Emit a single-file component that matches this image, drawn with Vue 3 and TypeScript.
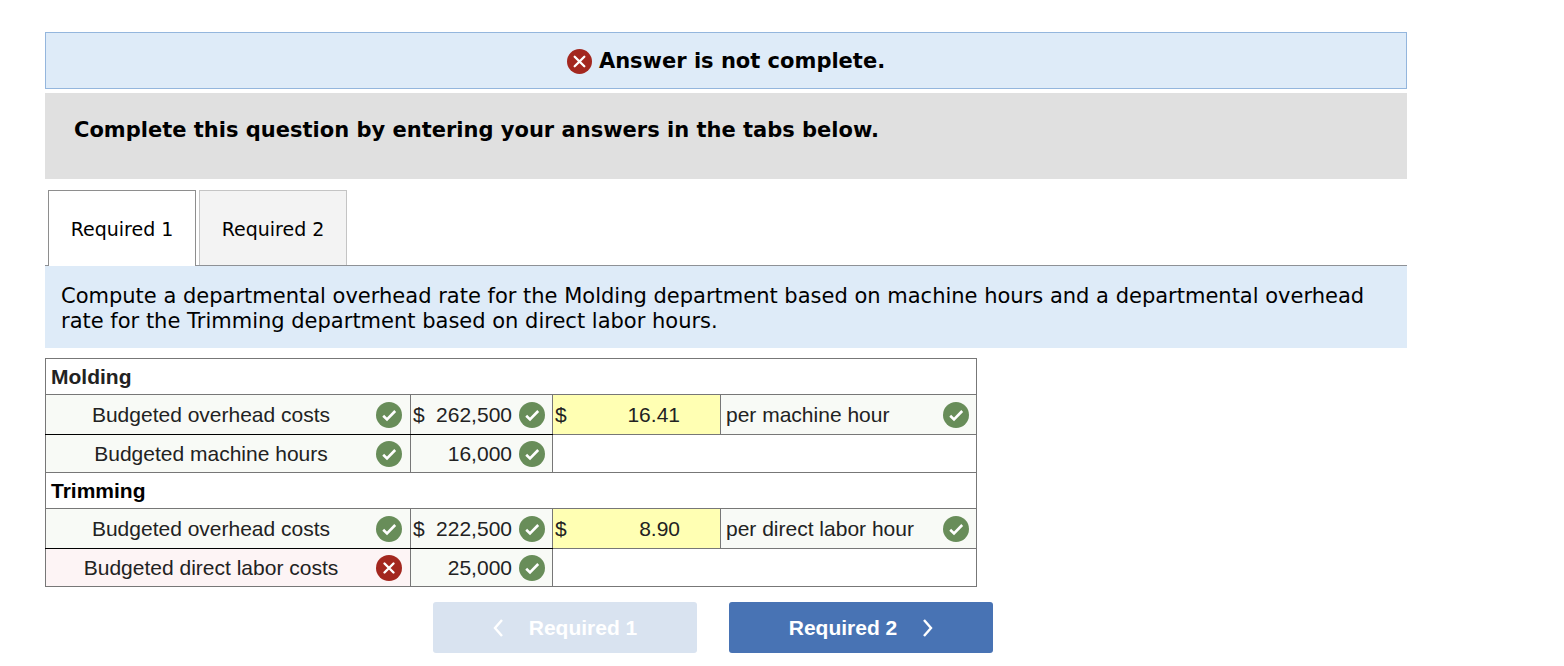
<script setup lang="ts">
import { ref } from 'vue'

interface Line {
  label: string
  correct: boolean
  currency: boolean
  amount: string
  rate?: string
  unit?: string
}

interface Department {
  name: string
  tone: string
  lines: Line[]
}

const tabs = ['Required 1', 'Required 2']
const active = ref(0)

const departments: Department[] = [
  {
    name: 'Molding',
    tone: 'soft',
    lines: [
      { label: 'Budgeted overhead costs', correct: true, currency: true, amount: '262,500', rate: '16.41', unit: 'per machine hour' },
      { label: 'Budgeted machine hours', correct: true, currency: false, amount: '16,000' },
    ],
  },
  {
    name: 'Trimming',
    tone: 'strong',
    lines: [
      { label: 'Budgeted overhead costs', correct: true, currency: true, amount: '222,500', rate: '8.90', unit: 'per direct labor hour' },
      { label: 'Budgeted direct labor costs', correct: false, currency: false, amount: '25,000' },
    ],
  },
]
</script>

<template>
  <main class="page">
    <header class="status">
      <svg class="mark" viewBox="0 0 26 26" aria-hidden="true">
        <circle cx="13" cy="13" r="13" fill="#a3271f" />
        <path d="M8 8l10 10M18 8L8 18" stroke="#fff" stroke-width="2.4" stroke-linecap="round" fill="none" />
      </svg>
      <span>Answer is not complete.</span>
    </header>

    <p class="prompt">Complete this question by entering your answers in the tabs below.</p>

    <div class="tabs" role="tablist">
      <button
        v-for="(tab, i) in tabs"
        :id="`tab-${i}`"
        :key="tab"
        type="button"
        role="tab"
        class="tab"
        :class="{ active: active === i }"
        :aria-selected="active === i"
        aria-controls="panel"
        @click="active = i"
      >{{ tab }}</button>
    </div>

    <section id="panel" role="tabpanel" :aria-labelledby="`tab-${active}`">
      <p class="instructions">
        Compute a departmental overhead rate for the Molding department based on machine hours and a departmental overhead rate for the Trimming department based on direct labor hours.
      </p>

      <table class="sheet">
        <colgroup>
          <col class="c-label" />
          <col class="c-amount" />
          <col class="c-rate" />
          <col class="c-unit" />
        </colgroup>
        <tbody v-for="dept in departments" :key="dept.name">
          <tr class="head">
            <th colspan="4" scope="rowgroup" :class="dept.tone">{{ dept.name }}</th>
          </tr>
          <tr v-for="line in dept.lines" :key="line.label" :class="line.rate ? 'first' : 'second'">
            <td class="label" :class="line.correct ? 'right' : 'wrong'">
              <div class="cell">
                <span class="name">{{ line.label }}</span>
                <svg class="mark" viewBox="0 0 26 26" role="img" :aria-label="line.correct ? 'Correct' : 'Incorrect'">
                  <circle cx="13" cy="13" r="13" :fill="line.correct ? '#688d59' : '#a3271f'" />
                  <path v-if="line.correct" d="M7.2 13.8l3.8 3.7L19.2 9" stroke="#fff" stroke-width="2.6" fill="none" />
                  <path v-else d="M8.5 8.5l9 9M17.5 8.5l-9 9" stroke="#fff" stroke-width="2.4" stroke-linecap="round" fill="none" />
                </svg>
              </div>
            </td>
            <td class="amount right">
              <div class="cell">
                <span v-if="line.currency">$</span>
                <span class="value">{{ line.amount }}</span>
                <svg class="mark" viewBox="0 0 26 26" role="img" aria-label="Correct">
                  <circle cx="13" cy="13" r="13" fill="#688d59" />
                  <path d="M7.2 13.8l3.8 3.7L19.2 9" stroke="#fff" stroke-width="2.6" fill="none" />
                </svg>
              </div>
            </td>
            <template v-if="line.rate">
              <td class="rate">
                <div class="cell">
                  <span>$</span>
                  <span class="value">{{ line.rate }}</span>
                </div>
              </td>
              <td class="unit right">
                <div class="cell">
                  <span>{{ line.unit }}</span>
                  <svg class="mark" viewBox="0 0 26 26" role="img" aria-label="Correct">
                    <circle cx="13" cy="13" r="13" fill="#688d59" />
                    <path d="M7.2 13.8l3.8 3.7L19.2 9" stroke="#fff" stroke-width="2.6" fill="none" />
                  </svg>
                </div>
              </td>
            </template>
            <td v-else colspan="2"></td>
          </tr>
        </tbody>
      </table>
    </section>

    <nav class="pager">
      <button type="button" class="step" :disabled="active === 0" @click="active = 0">
        <svg class="chevron" viewBox="0 0 10 18" aria-hidden="true">
          <path d="M9 1L2 9l7 8" stroke="currentColor" stroke-width="2.4" fill="none" />
        </svg>
        <span>Required 1</span>
      </button>
      <button type="button" class="step" @click="active = 1">
        <span>Required 2</span>
        <svg class="chevron" viewBox="0 0 10 18" aria-hidden="true">
          <path d="M1 1l7 8-7 8" stroke="currentColor" stroke-width="2.4" fill="none" />
        </svg>
      </button>
    </nav>
  </main>
</template>

<style>
body {
  background: #fff;
}
</style>

<style scoped>
.page {
  box-sizing: border-box;
  padding: 32px 157px 12px 45px;
  font-family: Verdana, "DejaVu Sans", sans-serif;
  color: #000;
}

.mark {
  display: block;
  flex: none;
  width: 26px;
  height: 26px;
}

.status {
  display: flex;
  align-items: center;
  justify-content: center;
  gap: 7px;
  padding: 16px 15px 14px;
  line-height: 25px;
  border: 1px solid #94b6dd;
  background: #deebf8;
  font-size: 21px;
  font-weight: bold;
}

.status .mark {
  width: 25px;
  height: 25px;
}

.prompt {
  margin: 4px 0 0;
  padding: 25px 29px 36px;
  background: #e0e0e0;
  font-size: 21px;
  line-height: 25px;
  font-weight: bold;
}

.tabs {
  display: flex;
  gap: 3px;
  margin-top: 11px;
  padding: 0 3px;
  border-bottom: 1px solid #8e9196;
}

.tab {
  box-sizing: border-box;
  min-width: 148px;
  height: 75px;
  padding: 2px 10px 0;
  border: 1px solid #c4c4c4;
  border-bottom: 0;
  background: #f3f3f3;
  font-family: inherit;
  font-size: 19px;
  color: #000;
}

.tab.active {
  height: 76px;
  margin-bottom: -1px;
  padding-bottom: 1px;
  border-color: #8e8e8e;
  background: #fff;
}

.instructions {
  margin: 0;
  padding: 18px 16px 14px;
  background: #deebf8;
  font-size: 21px;
  line-height: 25px;
}

.sheet {
  width: 932px;
  max-width: 100%;
  margin-top: 10px;
  border-collapse: collapse;
  table-layout: fixed;
  font-family: Arial, "Liberation Sans", sans-serif;
  font-size: 21px;
  line-height: 24px;
  color: #222;
}

.c-label {
  width: 365px;
}

.c-amount {
  width: 142px;
}

.c-rate {
  width: 168px;
}

.head {
  height: 36px;
}

.first {
  height: 40px;
}

.second {
  height: 38px;
}

.sheet th,
.sheet td {
  padding: 0;
  border: 1px solid #777;
}

.sheet th {
  padding-left: 5px;
  text-align: left;
}

.sheet th.strong {
  color: #000;
}

.cell {
  display: flex;
  align-items: center;
}

.right {
  background: #f8faf6;
}

.wrong {
  background: #fdf4f5;
}

.sheet .first .label,
.sheet .first .amount {
  border-bottom-color: #000;
}

.name {
  flex: 1;
  text-align: center;
}

.label .cell {
  padding-right: 8px;
}

.amount .cell,
.unit .cell {
  padding-right: 7px;
}

.amount .cell,
.rate .cell {
  padding-left: 2px;
}

.value {
  flex: 1;
  text-align: right;
}

.amount .value {
  margin-right: 7px;
}

.rate {
  background: #ffffb3;
}

.rate .cell {
  padding-right: 40px;
}

.unit .cell {
  justify-content: space-between;
  padding-left: 5px;
}

.pager {
  display: flex;
  justify-content: center;
  gap: 32px;
  margin-top: 15px;
  padding-right: 26px;
}

.step {
  display: flex;
  align-items: center;
  justify-content: center;
  gap: 26px;
  width: 264px;
  height: 51px;
  padding: 0;
  border: 0;
  border-radius: 3px;
  background: #4873b4;
  color: #fff;
  font-family: Arial, "Liberation Sans", sans-serif;
  font-size: 21px;
  font-weight: bold;
}

.step:disabled {
  background: #d9e3f0;
}

.chevron {
  width: 10px;
  height: 18px;
}
</style>
